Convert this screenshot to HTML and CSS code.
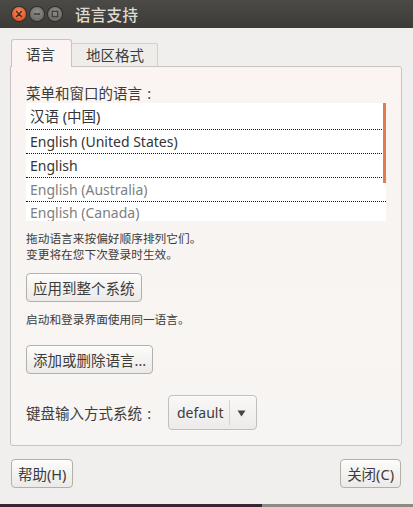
FILE: index.html
```html
<!DOCTYPE html>
<html lang="zh-CN">
<head>
<meta charset="utf-8">
<title>语言支持</title>
<link rel="stylesheet" href="styles.css">
</head>
<body>
<div class="window">
  <div class="titlebar">
    <div class="wm-buttons">
      <span class="wm-btn wm-close">
        <svg width="14" height="14" viewBox="0 0 14 14"><path d="M4.6 4.6 L9.4 9.4 M9.4 4.6 L4.6 9.4" stroke="#4a2b1f" stroke-width="1.4" stroke-linecap="round"/></svg>
      </span>
      <span class="wm-btn wm-min">
        <svg width="14" height="14" viewBox="0 0 14 14"><path d="M4 7 H10" stroke="#3c3b37" stroke-width="1.5"/></svg>
      </span>
      <span class="wm-btn wm-max">
        <svg width="14" height="14" viewBox="0 0 14 14"><rect x="4.3" y="4.3" width="5.4" height="5.4" fill="none" stroke="#3c3b37" stroke-width="1.2"/></svg>
      </span>
    </div>
    <div class="title">语言支持</div>
  </div>

  <div class="content">
    <div class="tabs">
      <div class="tab active">语言</div>
      <div class="tab">地区格式</div>
    </div>
    <div class="panel">
      <div class="label">菜单和窗口的语言<span class="fw">:</span></div>
      <div class="list">
        <div class="row first">汉语 (中国)</div>
        <div class="row">English (United States)</div>
        <div class="row">English</div>
        <div class="row dim">English (Australia)</div>
        <div class="row dim last">English (Canada)</div>
        <div class="scrollbar"></div>
      </div>
      <div class="hint hint-list">拖动语言来按偏好顺序排列它们。<br>变更将在您下次登录时生效。</div>
      <div class="btn-row apply-row"><button class="btn">应用到整个系统</button></div>
      <div class="hint hint-apply">启动和登录界面使用同一语言。</div>
      <div class="btn-row add-row"><button class="btn">添加或删除语言...</button></div>
      <div class="kbd-row">
        <span class="kbd-label">键盘输入方式系统<span class="fw">:</span></span>
        <div class="combo">
          <span class="combo-text">default</span>
          <span class="combo-sep"></span>
          <span class="combo-arrow">
            <svg width="9" height="7" viewBox="0 0 9 7"><path d="M0.5 0.5 H8.5 L4.5 6.5 Z" fill="#454543"/></svg>
          </span>
        </div>
      </div>
    </div>
    <div class="footer">
      <button class="btn">帮助(H)</button>
      <button class="btn">关闭(C)</button>
    </div>
  </div>
  <div class="desktop-strip">
    <span class="strip-left"></span>
    <span class="strip-right"></span>
  </div>
</div>
</body>
</html>
```

FILE: styles.css
```css
html, body {
  margin: 0;
  padding: 0;
}
body {
  width: 413px;
  height: 507px;
  overflow: hidden;
  background: #f0efed;
  font-family: "Noto Sans", "Noto Sans CJK SC", sans-serif;
  color: #3c3c3c;
}
.fw {
  display: inline-block;
  width: 1em;
  text-align: center;
}
.window {
  display: flex;
  flex-direction: column;
  height: 507px;
}
.titlebar {
  height: 28px;
  flex: none;
  display: flex;
  align-items: center;
  background: linear-gradient(#4b4a46, #3c3b37);
  color: #dfdbd2;
}
.wm-buttons {
  display: flex;
  gap: 4px;
  margin-left: 12px;
}
.wm-btn {
  width: 14px;
  height: 14px;
  border-radius: 50%;
  display: flex;
  align-items: center;
  justify-content: center;
}
.wm-close {
  background: radial-gradient(circle at 50% 35%, #f58a5c, #e0582a 70%);
  box-shadow: 0 0 0 1px #2e2d2a;
}
.wm-min, .wm-max {
  background: radial-gradient(circle at 50% 35%, #8f8e89, #6e6d69 70%);
  box-shadow: 0 0 0 1px #2e2d2a;
}
.title {
  margin-left: 13px;
  font-size: 15.5px;
  font-weight: 500;
  letter-spacing: 0.3px;
}
.content {
  flex: 1;
  padding: 11px 11px 0 10px;
  display: flex;
  flex-direction: column;
}
.tabs {
  display: flex;
  align-items: flex-end;
  height: 27px;
  margin-left: 1px;
}
.tab {
  font-size: 14.5px;
  box-sizing: border-box;
  height: 23px;
  line-height: 22px;
  padding: 0 13px 0 14px;
  border: 1px solid #d3cfca;
  border-bottom: none;
  border-left: none;
  background: #efedea;
  border-radius: 0 3px 0 0;
}
.tab.active {
  height: 28px;
  line-height: 28px;
  margin-bottom: -1px;
  position: relative;
  z-index: 1;
  width: 61px;
  border-left: 1px solid #c8c4bf;
  border-color: #c8c4bf;
  border-radius: 3px 3px 0 0;
  background: #fcf4f2;
}
.tab:not(.active) {
  width: 86px;
  padding-left: 14px;
  color: #3c3c3c;
}
.panel {
  box-sizing: border-box;
  height: 380px;
  border: 1px solid #c8c4bf;
  border-radius: 0 3px 3px 3px;
  background: linear-gradient(#fcf4f2 0px, #f9f4f2 60px, #f7f5f3 380px);
  padding: 17px 15px 0 15px;
}
.label {
  font-size: 14.5px;
  line-height: 18px;
}
.list {
  position: relative;
  margin-top: 1px;
  height: 118px;
  overflow: hidden;
  background: #ffffff;
}
.row {
  box-sizing: border-box;
  height: 24px;
  line-height: 23px;
  padding-left: 4px;
  font-size: 14px;
  border-bottom: 1px dotted #1a1a1a;
  color: #353535;
}
.row.first {
  height: 27px;
  line-height: 26px;
  font-size: 14.5px;
}
.row.dim {
  color: #808080;
}
.row.last {
  border-bottom: none;
  line-height: 21px;
}
.scrollbar {
  position: absolute;
  top: 0;
  right: 0;
  width: 3px;
  height: 80px;
  background: #e07c4e;
}
.hint {
  font-size: 11.7px;
  line-height: 16px;
  color: #3c3c3c;
}
.hint-list {
  margin-top: 9px;
}
.btn-row {
  display: flex;
}
.apply-row {
  margin-top: 11px;
}
.hint-apply {
  margin-top: 9px;
}
.add-row {
  margin-top: 18px;
}
.btn {
  box-sizing: border-box;
  height: 29px;
  padding: 0 6px;
  font-family: "Noto Sans", "Noto Sans CJK SC", sans-serif;
  font-size: 14.5px;
  color: #3c3c3c;
  border: 1px solid #b3afa9;
  border-radius: 4px;
  background: linear-gradient(#fcfcfb, #ebeae8);
  box-shadow: inset 0 1px 0 #ffffff;
}
.kbd-row {
  display: flex;
  align-items: center;
  margin-top: 21px;
}
.kbd-label {
  font-size: 14.5px;
  width: 142px;
}
.combo {
  box-sizing: border-box;
  height: 35px;
  width: 89px;
  display: flex;
  align-items: center;
  border: 1px solid #c2beb9;
  border-radius: 4px;
  background: linear-gradient(#f9f8f7, #ecebe9);
  box-shadow: inset 0 1px 0 #ffffff;
}
.combo-text {
  font-size: 14px;
  padding-left: 8px;
  width: 52px;
  color: #3c3c3c;
}
.combo-sep {
  width: 1px;
  height: 25px;
  background: #d6d3ce;
}
.combo-arrow {
  flex: 1;
  display: flex;
  justify-content: center;
  padding-top: 2px;
  padding-right: 4px;
}
.footer {
  display: flex;
  justify-content: space-between;
  margin-top: 13px;
  padding-left: 1px;
  padding-right: 1px;
}
.footer .btn {
  padding: 0 6px;
}
.desktop-strip {
  height: 3px;
  display: flex;
  flex: none;
}
.strip-left {
  width: 262px;
  background: #3b2532;
}
.strip-right {
  flex: 1;
  background: #8d8a86;
}
```
